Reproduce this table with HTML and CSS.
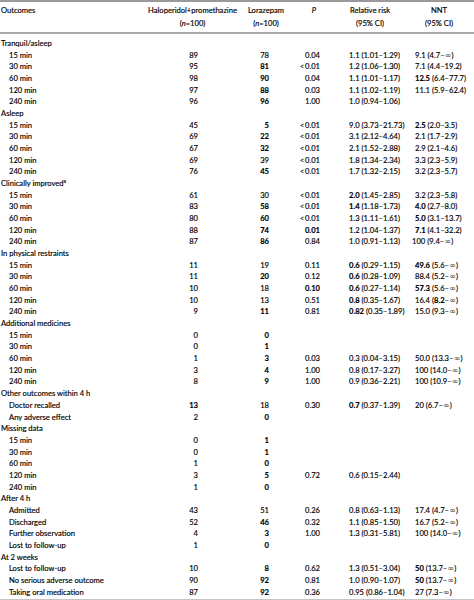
FILE: index.html
```html
<!DOCTYPE html>
<html>
<head>
<meta charset="utf-8">
<link rel="stylesheet" href="styles.css">
</head>
<body>
<div class="t">
<div class="hd">
<div class="lab">Outcomes</div><div class="hc">Haloperidol+promethazine<br>(<i>n</i>=100)</div><div class="hc">Lorazepam<br>(<i>n</i>=100)</div><div class="hc"><i>P</i></div><div class="hc">Relative risk<br>(95% CI)</div><div class="hc">NNT<br>(95% CI)</div>
</div>
<div class="bd">
<div class="r g"><span>Tranquil/asleep</span></div>
<div class="r"><span>15 min</span><span>89</span><span>78</span><span>0.04</span><span>1.1 (1.01–1.29)</span><span>9.1 (4.7–<em>∞</em>)</span></div>
<div class="r"><span>30 min</span><span>95</span><span><b>81</b></span><span>&lt;&#8201;0.01</span><span>1.2 (1.06–1.30)</span><span>7.1 (4.4–19.2)</span></div>
<div class="r"><span>60 min</span><span>98</span><span><b>90</b></span><span>0.04</span><span>1.1 (1.01–1.17)</span><span><b>12.5</b> (6.4–77.7)</span></div>
<div class="r"><span>120 min</span><span>97</span><span><b>88</b></span><span>0.03</span><span>1.1 (1.02–1.19)</span><span>11.1 (5.9–62.4)</span></div>
<div class="r"><span>240 min</span><span>96</span><span><b>96</b></span><span>1.00</span><span>1.0 (0.94–1.06)</span><span></span></div>
<div class="r g"><span>Asleep</span></div>
<div class="r"><span>15 min</span><span>45</span><span><b>5</b></span><span>&lt;&#8201;0.01</span><span>9.0 (3.73–21.73)</span><span><b>2.5</b> (2.0–3.5)</span></div>
<div class="r"><span>30 min</span><span>69</span><span><b>22</b></span><span>&lt;&#8201;0.01</span><span>3.1 (2.12–4.64)</span><span>2.1 (1.7–2.9)</span></div>
<div class="r"><span>60 min</span><span>67</span><span><b>32</b></span><span>&lt;&#8201;0.01</span><span>2.1 (1.52–2.88)</span><span>2.9 (2.1–4.6)</span></div>
<div class="r"><span>120 min</span><span>69</span><span>39</span><span>&lt;&#8201;0.01</span><span>1.8 (1.34–2.34)</span><span>3.3 (2.3–5.9)</span></div>
<div class="r"><span>240 min</span><span>76</span><span><b>45</b></span><span>&lt;&#8201;0.01</span><span>1.7 (1.32–2.15)</span><span>3.2 (2.3–5.7)</span></div>
<div class="r g"><span>Clinically improved<sup>a</sup></span></div>
<div class="r"><span>15 min</span><span>61</span><span>30</span><span>&lt;&#8201;0.01</span><span><b>2.0</b> (1.45–2.85)</span><span>3.2 (2.3–5.8)</span></div>
<div class="r"><span>30 min</span><span>83</span><span><b>58</b></span><span>&lt;&#8201;0.01</span><span><b>1.4</b> (1.18–1.73)</span><span><b>4.0</b> (2.7–8.0)</span></div>
<div class="r"><span>60 min</span><span>80</span><span><b>60</b></span><span>&lt;&#8201;0.01</span><span>1.3 (1.11–1.61)</span><span><b>5.0</b> (3.1–13.7)</span></div>
<div class="r"><span>120 min</span><span>88</span><span><b>74</b></span><span><b>0.01</b></span><span>1.2 (1.04–1.37)</span><span><b>7.1</b> (4.1–32.2)</span></div>
<div class="r"><span>240 min</span><span>87</span><span><b>86</b></span><span>0.84</span><span>1.0 (0.91–1.13)</span><span class="w">100 (9.4–<em>∞</em>)</span></div>
<div class="r g"><span>In physical restraints</span></div>
<div class="r"><span>15 min</span><span>11</span><span>19</span><span>0.11</span><span><b>0.6</b> (0.29–1.15)</span><span><b>49.6</b> (5.6–<em>∞</em>)</span></div>
<div class="r"><span>30 min</span><span>11</span><span><b>20</b></span><span>0.12</span><span><b>0.6</b> (0.28–1.09)</span><span>88.4 (5.2–<em>∞</em>)</span></div>
<div class="r"><span>60 min</span><span>10</span><span>18</span><span><b>0.10</b></span><span><b>0.6</b> (0.27–1.14)</span><span><b>57.3</b> (5.6–<em>∞</em>)</span></div>
<div class="r"><span>120 min</span><span>10</span><span>13</span><span>0.51</span><span><b>0.8</b> (0.35–1.67)</span><span>16.4 (<b>8.2</b>–<em>∞</em>)</span></div>
<div class="r"><span>240 min</span><span>9</span><span><b>11</b></span><span>0.81</span><span><b>0.82</b> (0.35–1.89)</span><span>15.0 (9.3–<em>∞</em>)</span></div>
<div class="r g"><span>Additional medicines</span></div>
<div class="r"><span>15 min</span><span>0</span><span><b>0</b></span><span></span><span></span><span></span></div>
<div class="r"><span>30 min</span><span>0</span><span><b>1</b></span><span></span><span></span><span></span></div>
<div class="r"><span>60 min</span><span>1</span><span><b>3</b></span><span>0.03</span><span>0.3 (0.04–3.15)</span><span>50.0 (13.3–<em>∞</em>)</span></div>
<div class="r"><span>120 min</span><span>3</span><span><b>4</b></span><span>1.00</span><span>0.8 (0.17–3.27)</span><span>100 (14.0–<em>∞</em>)</span></div>
<div class="r"><span>240 min</span><span>8</span><span><b>9</b></span><span>1.00</span><span>0.9 (0.36–2.21)</span><span>100 (10.9–<em>∞</em>)</span></div>
<div class="r g"><span>Other outcomes within 4 h</span></div>
<div class="r"><span>Doctor recalled</span><span><b>13</b></span><span>18</span><span>0.30</span><span><b>0.7</b> (0.37–1.39)</span><span>20 (6.7–<em>∞</em>)</span></div>
<div class="r"><span>Any adverse effect</span><span>2</span><span><b>0</b></span><span></span><span></span><span></span></div>
<div class="r g"><span>Missing data</span></div>
<div class="r"><span>15 min</span><span>0</span><span><b>1</b></span><span></span><span></span><span></span></div>
<div class="r"><span>30 min</span><span>0</span><span><b>1</b></span><span></span><span></span><span></span></div>
<div class="r"><span>60 min</span><span>1</span><span><b>0</b></span><span></span><span></span><span></span></div>
<div class="r"><span>120 min</span><span>3</span><span><b>5</b></span><span>0.72</span><span>0.6 (0.15–2.44)</span><span></span></div>
<div class="r"><span>240 min</span><span>1</span><span><b>0</b></span><span></span><span></span><span></span></div>
<div class="r g"><span>After 4 h</span></div>
<div class="r"><span>Admitted</span><span>43</span><span>51</span><span>0.26</span><span>0.8 (0.63–1.13)</span><span>17.4 (4.7–<em>∞</em>)</span></div>
<div class="r"><span>Discharged</span><span>52</span><span><b>46</b></span><span>0.32</span><span>1.1 (0.85–1.50)</span><span>16.7 (5.2–<em>∞</em>)</span></div>
<div class="r"><span>Further observation</span><span>4</span><span><b>3</b></span><span>1.00</span><span>1.3 (0.31–5.81)</span><span>100 (14.0–<em>∞</em>)</span></div>
<div class="r"><span>Lost to follow-up</span><span>1</span><span><b>0</b></span><span></span><span></span><span></span></div>
<div class="r g"><span>At 2 weeks</span></div>
<div class="r"><span>Lost to follow-up</span><span>10</span><span><b>8</b></span><span>0.62</span><span>1.3 (0.51–3.04)</span><span><b>50</b> (13.7–<em>∞</em>)</span></div>
<div class="r"><span>No serious adverse outcome</span><span>90</span><span><b>92</b></span><span>0.81</span><span>1.0 (0.90–1.07)</span><span><b>50</b> (13.7–<em>∞</em>)</span></div>
<div class="r"><span>Taking oral medication</span><span>87</span><span><b>92</b></span><span>0.36</span><span>0.95 (0.86–1.04)</span><span>27 (7.3–<em>∞</em>)</span></div>
</div>
</div>
</body>
</html>
```
FILE: styles.css
```css
html, body {
  margin: 0;
  padding: 0;
  background: #fff;
}
.t {
  width: 474px;
  font-family: Lato, "Open Sans", sans-serif;
  font-size: 7.6px;
  color: #000;
  -webkit-text-stroke: 0.15px #000;
  border-top: 2px solid #9a9a9a;
}
.hd, .r {
  display: grid;
  grid-template-columns: 145px 95px 52px 44px 68px 70px;
  white-space: nowrap;
}
.hd {
  line-height: 13px;
  padding: 2px 0 2px 0;
  border-bottom: 2px solid #a8a8a8;
}
.hd .lab { padding-left: 1px; }
.hd .hc { text-align: center; }
.bd {
  padding: 4px 0 1px 0;
  border-bottom: 2px solid #c4c4c4;
}
.r {
  height: 11.68px;
  line-height: 11.68px;
}
.r span:nth-child(1) { padding-left: 9px; }
.r.g span:nth-child(1) { padding-left: 1px; }
.r span:nth-child(2) { text-align: right; padding-right: 42px; }
.r span:nth-child(3) { text-align: right; padding-right: 23px; }
.r span:nth-child(4) { text-align: right; padding-right: 16px; }
.r span:nth-child(5) { text-align: left; padding-left: 13px; }
.r span:nth-child(6) { text-align: left; padding-left: 11px; }
.r span.w:nth-child(6) { padding-left: 8px; }
b { font-weight: bold; }
em { font-style: normal; font-family: "DejaVu Sans", sans-serif; font-size: 8.4px; line-height: 0; -webkit-text-stroke: 0; color: #333; }
sup { font-size: 5px; line-height: 0; vertical-align: 3px; }
```
